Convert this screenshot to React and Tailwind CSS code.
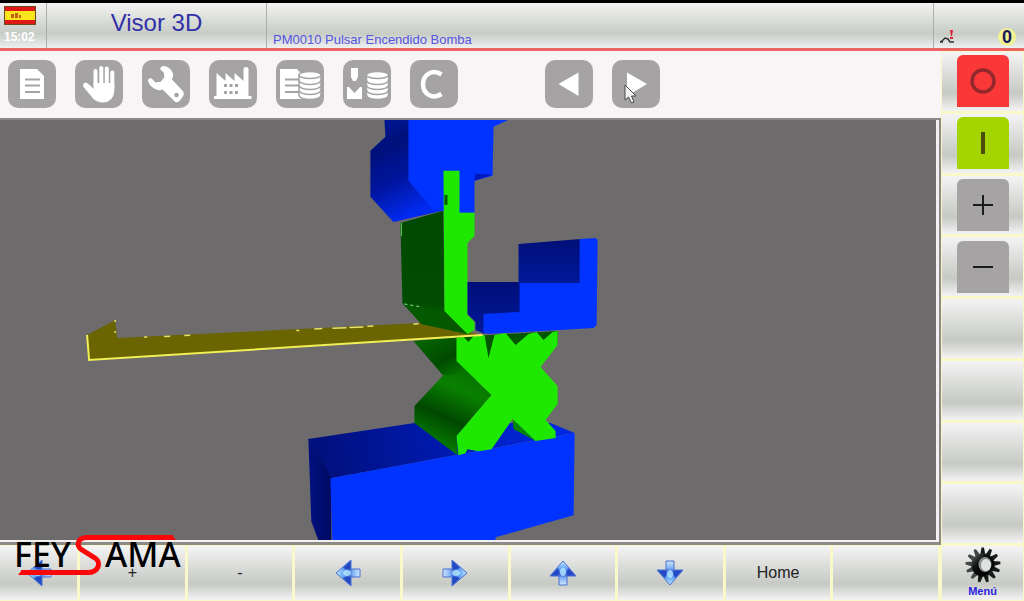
import { useState } from "react";

const toolClass =
  "relative flex h-12 w-12 shrink-0 items-center justify-center rounded-[10px] bg-[#a5a3a4]";

const cellClass =
  "flex items-center justify-center border-[#f8f8c8] bg-linear-to-b from-[#f4f4f4] via-[#c6c9c4] via-70% to-[#f3f3f3]";

const headerCell =
  "bg-linear-to-b from-[#f3f3f1] via-[#c7ccc5] via-68% to-[#eef0ef]";

const Disks = () => (
  <g fill="#fff" stroke="#a5a3a4" strokeWidth="1.5">
    <path d="M23 31v4c0 6 22 6 22 0v-4z" />
    <path d="M23 26v4c0 6 22 6 22 0v-4z" />
    <path d="M23 21v4c0 6 22 6 22 0v-4z" />
    <path d="M23 15v5c0 6 22 6 22 0v-5z" />
    <ellipse cx="34" cy="15" rx="11" ry="3.5" />
  </g>
);

const tools = [
  {
    label: "Programa",
    icon: (
      <>
        <path d="M12 9h17l7 7v23H12z" fill="#fff" />
        <path d="M17 19.5h15M17 25.5h15M17 32h15" stroke="#a5a3a4" strokeWidth="2" />
      </>
    ),
  },
  {
    label: "Manual",
    icon: (
      <>
        <path
          d="M20.5 11v14M26.3 8v16M31.800 8.500v16M37.300 12.500v15"
          stroke="#fff"
          strokeWidth="4"
          strokeLinecap="round"
        />
        <path
          d="M18.500 23H39.300V31Q38.500 42 28 42.500Q20 42 16 36L8.500 27Q7 23 10.500 22.500Q13 22.500 18.500 29z"
          fill="#fff"
        />
      </>
    ),
  },
  {
    label: "Ajustes",
    icon: (
      <>
        <path
          d="M18 9Q19 5.500 22.500 6Q30 8 31.300 15L30 19.500L41.300 31.500Q42.500 34 41 36.500L37 41.500Q35 43 33 41.700L20.500 29.500Q17 31 14 29.300Q8 27 6 21Q6 17.500 9.500 18.300L13.500 22.500L18.700 21.700L22.300 17.300L22 13z"
          fill="#fff"
        />
        <circle cx="34.500" cy="35" r="2.300" fill="#a5a3a4" />
      </>
    ),
  },
  {
    label: "Producción",
    icon: (
      <>
        <path
          d="M7.500 13l9 8v-8l9 8v-8l9 8V9q0-2 2.500-2t2.500 2v27h3v3H5v-3h2.500z"
          fill="#fff"
        />
        <path
          d="M15 24h3v3h-3zM20.500 24h3v3h-3zM26 24h3v3h-3zM15 31h3v3h-3zM20.500 31h3v3h-3zM26 31h3v3h-3z"
          fill="#a5a3a4"
        />
      </>
    ),
  },
  {
    label: "Lista de programas",
    icon: (
      <>
        <path d="M4 9h17l6 7v23H4z" fill="#fff" />
        <path d="M9 19.500h15M9 25.500h15M9 32h15" stroke="#a5a3a4" strokeWidth="2" />
        <Disks />
      </>
    ),
  },
  {
    label: "Herramientas",
    icon: (
      <>
        <path d="M8 8h7v9l-2 4h-3l-2-4z" fill="#fff" />
        <path d="M4 27h2l5.500 6 5.500-6h2v12H4z" fill="#fff" />
        <g transform="translate(.5 0)">
          <Disks />
        </g>
      </>
    ),
  },
  {
    label: "Corregir",
    icon: (
      <path
        d="M31.500 14.500C22 8.500 13 15 13 24.300S22 40 31.500 34"
        fill="none"
        stroke="#fff"
        strokeWidth="4.500"
      />
    ),
  },
];

const Arrow = ({ turn }) => (
  <svg viewBox="0 0 28 28" className="h-7 w-7" aria-hidden="true">
    <defs>
      <linearGradient id={"arrow" + turn} x1="0" x2="1">
        <stop offset="0" stopColor="#c4ecff" />
        <stop offset=".3" stopColor="#6aa8f6" />
        <stop offset=".55" stopColor="#2a52cc" />
        <stop offset=".7" stopColor="#7fb0f4" />
        <stop offset="1" stopColor="#cfe6fb" />
      </linearGradient>
    </defs>
    <g transform={`rotate(${turn} 14 14)`}>
      <path
        d="M2 14L17 1V10H26V18H17V27z"
        fill={`url(#arrow${turn})`}
        stroke="#4a70d2"
        strokeWidth="1"
      />
      <path d="M16.500 2V9.500L12 10L9 9zM16.500 26V18.500L12 18L9 19z" fill="#2348c2" />
      <ellipse cx="13" cy="14" rx="4" ry="3" fill="#b8ecff" opacity=".8" />
    </g>
  </svg>
);

const footerKeys = [
  { label: "Anterior", content: <Arrow turn={0} /> },
  { label: "Acercar", content: "+" },
  { label: "Alejar", content: "-" },
  { label: "Izquierda", content: <Arrow turn={0} /> },
  { label: "Derecha", content: <Arrow turn={180} /> },
  { label: "Arriba", content: <Arrow turn={90} /> },
  { label: "Abajo", content: <Arrow turn={270} /> },
  { label: "Home", content: "Home" },
  { label: "Libre", content: "" },
];

const sideKeys = [
  {
    label: "Parada",
    color: "bg-[#fb3838]",
    icon: <circle cx="26" cy="26" r="11" fill="none" stroke="#92282b" strokeWidth="3.500" />,
  },
  {
    label: "Marcha",
    color: "bg-[#a5d500]",
    icon: <path d="M26 15v22" stroke="#4d4c0b" strokeWidth="4" />,
  },
  {
    label: "Más",
    color: "bg-[#a5a3a4]",
    icon: <path d="M16 26h20M26 16v20" stroke="#1c1c1c" strokeWidth="2" />,
  },
  {
    label: "Menos",
    color: "bg-[#a5a3a4]",
    icon: <path d="M16 26h20" stroke="#1c1c1c" strokeWidth="2" />,
  },
];

const Gear = () => (
  <svg viewBox="0 0 38 36" className="h-9 w-[38px]" aria-hidden="true">
    <defs>
      <linearGradient id="gear" x1="0" y1="0" x2="1" y2="1">
        <stop offset="0" stopColor="#66706c" />
        <stop offset=".35" stopColor="#111" />
        <stop offset=".75" stopColor="#000" />
        <stop offset="1" stopColor="#59615e" />
      </linearGradient>
    </defs>
    {Array.from({ length: 13 }, (_, i) => (
      <path
        key={i}
        d="M16 9L17.500 .5L20 .5L21.500 9z"
        fill={i > 7 ? "#414845" : "#171a19"}
        transform={`rotate(${(i * 360) / 13} 19 18)`}
      />
    ))}
    <circle cx="19" cy="18" r="11.500" fill="url(#gear)" />
    <ellipse cx="21" cy="17.500" rx="6.500" ry="7.500" fill="#8d9390" />
    <ellipse cx="22" cy="18" rx="5" ry="6" fill="#dfe2e0" />
  </svg>
);

// bending machine, bottom to top: bed, die, sheet, punch, back stop
const Scene = () => (
  <svg
    viewBox="0 120 935 420"
    preserveAspectRatio="xMidYMid slice"
    className="min-h-0 w-full flex-1 basis-0 bg-[#6e6b6c]"
    role="img"
    aria-label="Vista 3D de la plegadora"
  >
    <defs>
      <linearGradient id="ram" x1="0" y1="0" x2=".35" y2="1">
        <stop offset="0" stopColor="#001a9c" />
        <stop offset=".3" stopColor="#00107a" />
        <stop offset=".65" stopColor="#0015a0" />
        <stop offset="1" stopColor="#002af0" />
      </linearGradient>
      <linearGradient id="bed" gradientUnits="userSpaceOnUse" x1="320" y1="470" x2="550" y2="420">
        <stop offset="0" stopColor="#00107c" />
        <stop offset=".55" stopColor="#001ab0" />
        <stop offset="1" stopColor="#0028e0" />
      </linearGradient>
      <linearGradient id="bedSide">
        <stop offset="0" stopColor="#001080" />
        <stop offset="1" stopColor="#000a62" />
      </linearGradient>
      <linearGradient id="stop" x1="0" y1="0" x2="0" y2="1">
        <stop offset="0" stopColor="#000f78" />
        <stop offset="1" stopColor="#001899" />
      </linearGradient>
      <linearGradient
        id="dieTop"
        gradientUnits="userSpaceOnUse"
        x1="425"
        y1="338"
        x2="448"
        y2="380"
      >
        <stop offset="0" stopColor="#056400" />
        <stop offset=".6" stopColor="#004a00" />
        <stop offset="1" stopColor="#077400" />
      </linearGradient>
      <linearGradient
        id="dieSide"
        gradientUnits="userSpaceOnUse"
        x1="462"
        y1="370"
        x2="430"
        y2="440"
      >
        <stop offset="0" stopColor="#077400" />
        <stop offset=".25" stopColor="#098000" />
        <stop offset=".65" stopColor="#004800" />
        <stop offset="1" stopColor="#067800" />
      </linearGradient>
      <linearGradient id="punch" x1="0" y1="0" x2="0" y2="1">
        <stop offset="0" stopColor="#004a00" />
        <stop offset=".75" stopColor="#004c00" />
        <stop offset="1" stopColor="#0a6a00" />
      </linearGradient>
    </defs>

    <path d="M308 439L414 423H550L574 433L331 478z" fill="url(#bed)" />
    <path d="M308 438L331 477V540H318L311 521z" fill="url(#bedSide)" />
    <path d="M330 478L574 433L573 515L495 537V540H332z" fill="#0033ff" />

    <path d="M456 337L557 331V345L540 360L470 367z" fill="#045500" />
    <path d="M512 419L535 441L513 429z" fill="#058500" />
    <path d="M413 341L457 337V361L477 381L443 376z" fill="url(#dieTop)" />
    <path d="M443 375L470 375L491 395L456 436L457 455L414 423V406z" fill="url(#dieSide)" />
    <path
      d="M456 338L463 337L468 342L473 336L484 335L488 358L494 335L505 333L515 345L528 334L536 332L543 340L552 332L557 331V345L540 367L557 386V404L545 420L555 431V438L535 441L512 419L491 449L478 451L467 449L465 453L458 455L456 436L491 395L456 361z"
      fill="#1fe800"
    />

    <path d="M87 335L115 320L117 338L420 323L482 335L89 360z" fill="#6a6500" />
    <path d="M87 335L89 360L482 335" fill="none" stroke="#f1ef55" strokeWidth="2" />
    <path
      d="M144 337l3 0M164 336.500l6-.3M184 335.500l6-.3M296 330.500l3 0M314 329l8-.4M332 328.300l14-.6M349 327.500l14-.6M367 326.300l6-.3M413 324l5-.2"
      fill="none"
      stroke="#e5e36a"
      strokeWidth="1.500"
    />
    <path d="M115 320v18" stroke="#e5e36a" strokeWidth="1.500" strokeDasharray="2 9" />

    <path d="M384 120H410V181L442 211L393 222L370 197V151L385 137z" fill="url(#ram)" />
    <path d="M408 120H508L493 127L492 176L474 181V213H459L442 211L432 209L408 181z" fill="#0033ff" />
    <path d="M475 174L492 175L474 181z" fill="#0019b8" />

    <path d="M400 223L443 211L444 311L467 334L421 324L402 303z" fill="url(#punch)" />
    <path d="M444 311L467 334L421 324L402 303z" fill="#045800" />
    <path d="M401 223v13" stroke="#4ed04a" strokeWidth="1" />
    <path d="M404 304l18 3" stroke="#8fd88a" strokeWidth="1" strokeDasharray="3 3" />
    <path
      d="M443 171H459V213H474V236L467 243V315L474 322V330L467 334L444 311z"
      fill="#1fe800"
    />
    <path d="M444 195h3v10h-3z" fill="#045800" />

    <path d="M467 282H520V314L484 316V334L475 330V322L467 314z" fill="url(#stop)" />
    <path d="M518 244L580 239V284H518z" fill="url(#stop)" />
    <path d="M483 314L519 312V283H579V239L595 238L597 240L596 325L593 328L488 334L483 333z" fill="#0033ff" />
  </svg>
);

const Logo = () => (
  <svg
    viewBox="0 0 180 48"
    className="pointer-events-none absolute -top-4 left-2 h-12 w-[180px]"
    role="img"
    aria-label="FEYSAMA"
  >
    <g fontFamily="'Noto Sans', sans-serif" fontSize="34" fontWeight="500" fill="#000">
      <text x="6" y="38">
        FEY
      </text>
      <text x="97" y="38">
        AMA
      </text>
    </g>
    <path
      d="M165 8.500H79C69 8.500 68 17 74 21L87 29C94 34 90 43.500 80 43.500H13"
      fill="none"
      stroke="#f80808"
      strokeWidth="5"
    />
    <path d="M164 6l4 5h-4zM14 41l-4 5h4z" fill="#f80808" />
  </svg>
);

const App = () => {
  const [step, setStep] = useState(0);

  return (
    <div className="flex h-screen min-h-[560px] flex-col overflow-hidden bg-[#f8f5f6] font-['Liberation_Sans',Arial,sans-serif]">
      {/* header */}
      <header className="flex h-[51px] shrink-0 gap-px border-t-[3px] border-b-[3px] border-t-black border-b-[#ee6464] bg-[#aaaeaa]">
        <button
          aria-label="Idioma y hora"
          className={`flex w-[46px] flex-col items-start gap-1 pt-[3px] pl-1 ${headerCell}`}
        >
          <svg viewBox="0 0 32 19" className="h-[19px] w-8" aria-hidden="true">
            <path d="M0 0h32v19H0z" fill="#df1a16" />
            <path d="M0 5h32v9H0z" fill="#fbe51c" />
            <path d="M7 8h3v4H7zM11 7h3v5h-3zM15 9h2v3h-2z" fill="#c2621a" />
            <path d="M.5 .5h31v18H.5z" fill="none" stroke="#6a4a1c" />
          </svg>
          <span className="text-xs leading-4 font-bold text-white">15:02</span>
        </button>
        <h1
          className={`w-[219px] text-center text-2xl leading-10 text-[#3230a8] ${headerCell}`}
        >
          Visor 3D
        </h1>
        <p
          className={`flex flex-1 items-end pl-1.5 text-[13px] leading-4 text-[#5654e2] ${headerCell}`}
        >
          PM0010 Pulsar Encendido Bomba
        </p>
        <div className={`flex w-[90px] items-end justify-between pr-2 pb-0.5 pl-1.5 ${headerCell}`}>
          <svg viewBox="0 0 16 18" className="h-[18px] w-4" aria-hidden="true">
            <path
              d="M0 14L2 13L5 10L8 11L10 14H14M0 14h3"
              fill="none"
              stroke="#333"
              strokeWidth="1.500"
            />
            <path d="M10 2h3l-1 6h-1zM10 9h3v2h-3z" fill="#d92336" />
          </svg>
          <output
            aria-label="Alarmas"
            className="flex h-[18px] w-[18px] items-center justify-center rounded-full bg-[#f3f293] text-lg leading-4 font-bold text-[#17175c]"
          >
            0
          </output>
        </div>
      </header>

      <main className="grid min-h-0 flex-1 grid-cols-[minmax(0,1fr)_83px]">
        <div className="flex min-h-0 flex-col">
          {/* toolbar */}
          <div className="flex h-[67px] shrink-0 items-center gap-[19px] pb-0.5 pl-2">
            {tools.map((tool) => (
              <button key={tool.label} aria-label={tool.label} className={toolClass}>
                <svg viewBox="0 0 48 48" className="h-12 w-12">
                  {tool.icon}
                </svg>
              </button>
            ))}
            <div className="ml-[68px] flex gap-[19px]">
              <button
                aria-label="Paso anterior"
                className={toolClass}
                onClick={() => setStep(step - 1)}
              >
                <svg viewBox="0 0 48 48" className="h-12 w-12">
                  <path d="M13.500 24L33.500 12.500V36z" fill="#fff" />
                </svg>
              </button>
              <button
                aria-label="Paso siguiente"
                className={toolClass}
                onClick={() => setStep(step + 1)}
              >
                <svg viewBox="0 0 48 48" className="h-12 w-12">
                  <path d="M35 24L15 12.500V36z" fill="#fff" />
                </svg>
                <svg
                  viewBox="0 0 14 20"
                  className="pointer-events-none absolute top-6 left-3 h-5 w-3.5"
                  aria-hidden="true"
                >
                  <path
                    d="M1 1V16L4.500 13L7.500 19L10 18L7.500 12H12z"
                    fill="#f3f3f3"
                    stroke="#4a4a4a"
                    strokeWidth="1"
                  />
                </svg>
              </button>
            </div>
          </div>

          {/* viewer */}
          <div className="flex min-h-0 flex-1 flex-col border-t-2 border-r-2 border-b-3 border-[#8d8987]">
            <div className="flex min-h-0 flex-1 flex-col border-r-3 border-b-2 border-[#f1efef]">
              <Scene />
            </div>
          </div>

          {/* bottom keys */}
          <nav className="relative grid h-14 shrink-0 grid-cols-[80px_repeat(8,minmax(0,1fr))]">
            {footerKeys.map((item) => (
              <button
                key={item.label}
                aria-label={item.label}
                className={`border-y border-r-3 text-base text-[#222] ${cellClass}`}
              >
                {item.content}
              </button>
            ))}
            <Logo />
          </nav>
        </div>

        {/* side keys */}
        <aside className="flex min-h-0 flex-col">
          <div className="grid min-h-0 flex-1 grid-rows-8">
            {sideKeys.map((item) => (
              <div key={item.label} className={`border-x border-t border-b-2 ${cellClass}`}>
                <button
                  aria-label={item.label}
                  className={`h-[52px] w-[52px] rounded-t-md ${item.color}`}
                >
                  <svg viewBox="0 0 52 52" className="h-[52px] w-[52px]">
                    {item.icon}
                  </svg>
                </button>
              </div>
            ))}
            <div className={`border-x border-t border-b-2 ${cellClass}`}></div>
            <div className={`border-x border-t border-b-2 ${cellClass}`}></div>
            <div className={`border-x border-t border-b-2 ${cellClass}`}></div>
            <div className={`border-x border-t border-b-2 ${cellClass}`}></div>
          </div>
          <button
            className={`h-14 shrink-0 flex-col border text-[11px] leading-4 font-bold text-[#2a22e0] ${cellClass}`}
          >
            <Gear />
            Menú
          </button>
        </aside>
      </main>
    </div>
  );
};

export default App;
